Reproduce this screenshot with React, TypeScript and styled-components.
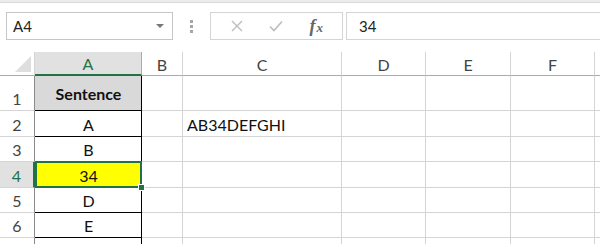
import React from 'react';
import styled, { createGlobalStyle } from 'styled-components';

const GlobalStyle = createGlobalStyle`
  html, body {
    margin: 0;
    padding: 0;
    background: #ffffff;
    overflow: hidden;
  }
  * {
    box-sizing: border-box;
  }
`;

const columns = ['A', 'B', 'C', 'D', 'E', 'F', ''];
// row 7 only peeks in at the bottom edge, so its number isn't shown
const rowHeights = [35, 26, 25, 26, 25, 25, 25];

const cells: Record<string, string> = {
  A1: 'Sentence',
  A2: 'A',
  A3: 'B',
  A4: '34',
  A5: 'D',
  A6: 'E',
  C2: 'AB34DEFGHI',
};

const App = () => {
  return (
    <Window>
      <GlobalStyle />
      <TopStrip />
      <FormulaBar>
        <NameBox>
          <span>A4</span>
          <DropArrow />
        </NameBox>
        <Dots>
          <i />
          <i />
          <i />
        </Dots>
        <ButtonGroup>
          <BarButton>
            <svg width="14" height="14" viewBox="0 0 14 14">
              <path d="M2 2 L12 12 M12 2 L2 12" stroke="#bdbdbd" strokeWidth="1.4" fill="none" />
            </svg>
          </BarButton>
          <BarButton>
            <svg width="16" height="14" viewBox="0 0 16 14">
              <path d="M2 7.5 L6 11.5 L14 2.5" stroke="#bdbdbd" strokeWidth="1.6" fill="none" />
            </svg>
          </BarButton>
          <FxButton>
            <em>f</em>
            <small>x</small>
          </FxButton>
        </ButtonGroup>
        <FormulaInput>34</FormulaInput>
      </FormulaBar>

      <Sheet>
        <Corner>
          <svg width="18" height="18" viewBox="0 0 18 18">
            <polygon points="17,1 17,17 1,17" fill="#dedede" />
          </svg>
        </Corner>
        {columns.map((c) => (
          <ColHeader key={c || 'G'} $active={c === 'A'}>
            {c}
          </ColHeader>
        ))}

        {rowHeights.map((h, i) => {
          const row = i + 1;
          return (
            <React.Fragment key={row}>
              <RowHeader $active={row === 4}>{row < 7 ? row : ''}</RowHeader>
              {columns.map((c) => {
                const id = `${c}${row}`;
                const col = c || 'G';
                return (
                  <Cell
                    key={col}
                    $bordered={col === 'A'}
                    $header={id === 'A1'}
                    $selected={id === 'A4'}
                    $align={col === 'A' ? 'center' : 'left'}
                  >
                    {cells[id]}
                    {id === 'A4' && <FillHandle />}
                  </Cell>
                );
              })}
            </React.Fragment>
          );
        })}
      </Sheet>
    </Window>
  );
};

const Window = styled.div`
  width: 600px;
  height: 244px;
  overflow: hidden;
  background: #ffffff;
  font-family: Lato, 'Open Sans', sans-serif;
`;

const TopStrip = styled.div`
  height: 3px;
  background: #ececec;
  border-bottom: 1px solid #d9d9d9;
`;

const FormulaBar = styled.div`
  display: flex;
  align-items: center;
  height: 49px;
  padding: 0 0 3px 6px;
`;

const NameBox = styled.div`
  width: 167px;
  height: 28px;
  border: 1px solid #c6c6c6;
  display: flex;
  align-items: center;
  justify-content: space-between;
  padding: 0 8px 0 6px;
  font-size: 15px;
  color: #222;
`;

const DropArrow = styled.div`
  width: 0;
  height: 0;
  border-left: 4px solid transparent;
  border-right: 4px solid transparent;
  border-top: 4px solid #777;
`;

const Dots = styled.div`
  width: 37px;
  display: flex;
  flex-direction: column;
  align-items: center;
  gap: 2px;

  i {
    width: 3px;
    height: 3px;
    background: #a6a6a6;
  }
`;

const ButtonGroup = styled.div`
  width: 133px;
  height: 28px;
  border: 1px solid #d4d4d4;
  display: flex;
  align-items: center;
  justify-content: space-around;
  padding: 0 6px 0 6px;
`;

const BarButton = styled.div`
  width: 30px;
  display: flex;
  justify-content: center;
  align-items: center;
`;

const FxButton = styled.div`
  width: 30px;
  display: flex;
  justify-content: center;
  align-items: baseline;
  font-family: 'Liberation Serif', serif;
  color: #666;

  em {
    font-size: 18px;
    font-weight: bold;
  }

  small {
    font-size: 13px;
    font-style: italic;
    font-weight: bold;
    margin-left: 1px;
  }
`;

const FormulaInput = styled.div`
  flex: 1;
  height: 28px;
  margin-left: 3px;
  border: 1px solid #d4d4d4;
  border-right: none;
  display: flex;
  align-items: center;
  padding-left: 12px;
  font-size: 15px;
  color: #222;
`;

const Sheet = styled.div`
  display: grid;
  grid-template-columns: 35px 107px 41px 159px 84px 85px 84px 1fr;
  grid-template-rows: 24px ${rowHeights.map((h) => `${h}px`).join(' ')};
  font-size: 16px;
`;

const Corner = styled.div`
  border-right: 1px solid #d4d4d4;
  border-bottom: 1px solid #ababab;
  display: flex;
  align-items: flex-end;
  justify-content: flex-end;
  padding: 0 2px 2px 0;
`;

const ColHeader = styled.div<{ $active?: boolean }>`
  display: flex;
  align-items: center;
  justify-content: center;
  background: ${(p) => (p.$active ? '#e1e1e1' : '#ffffff')};
  color: ${(p) => (p.$active ? '#217346' : '#444444')};
  border-right: 1px solid ${(p) => (p.$active ? '#ababab' : '#d4d4d4')};
  border-bottom: ${(p) => (p.$active ? '2px solid #217346' : '1px solid #ababab')};
  font-size: 16px;
  padding-top: 1px;
`;

const RowHeader = styled.div<{ $active?: boolean }>`
  display: flex;
  align-items: flex-end;
  justify-content: center;
  background: ${(p) => (p.$active ? '#e1e1e1' : '#ffffff')};
  color: ${(p) => (p.$active ? '#217346' : '#444444')};
  border-right: ${(p) => (p.$active ? '2px solid #217346' : '1px solid #8a8a8a')};
  border-bottom: 1px solid #d4d4d4;
  font-size: 16px;
  padding-bottom: 2px;
`;

const Cell = styled.div<{
  $bordered?: boolean;
  $header?: boolean;
  $selected?: boolean;
  $align: 'center' | 'left';
}>`
  position: relative;
  display: flex;
  align-items: center;
  justify-content: ${(p) => (p.$align === 'center' ? 'center' : 'flex-start')};
  padding: 1px 3px 0 4px;
  border-right: 1px solid ${(p) => (p.$bordered ? '#000000' : '#d4d4d4')};
  border-bottom: 1px solid ${(p) => (p.$bordered ? '#000000' : '#d4d4d4')};
  background: ${(p) => (p.$header ? '#d9d9d9' : p.$selected ? '#ffff00' : '#ffffff')};
  font-weight: ${(p) => (p.$header ? 700 : 400)};
  color: #111;
  white-space: nowrap;
  overflow: visible;

  ${(p) =>
    p.$selected &&
    `
    &::after {
      content: '';
      position: absolute;
      left: 0;
      top: -1px;
      right: -1px;
      bottom: -1px;
      border: 2px solid #217346;
    }
  `}
`;

const FillHandle = styled.span`
  position: absolute;
  right: -4px;
  bottom: -4px;
  width: 7px;
  height: 7px;
  background: #217346;
  border: 1px solid #ffffff;
  z-index: 2;
`;

export default App;
